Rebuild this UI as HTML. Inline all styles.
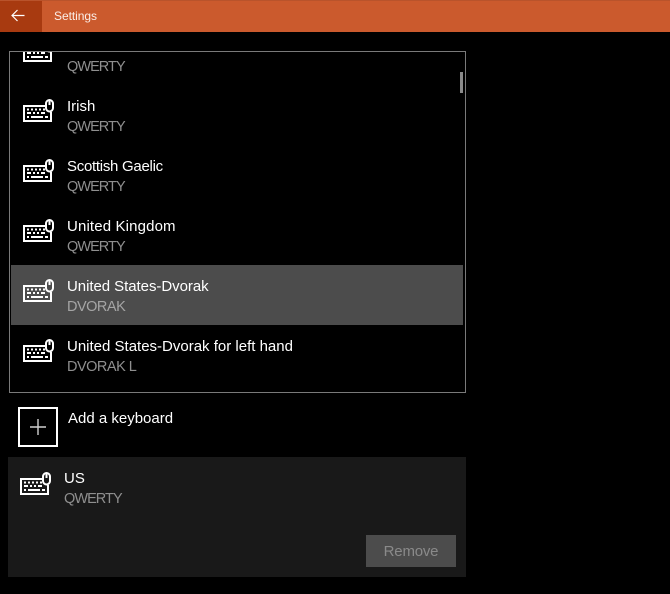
<!DOCTYPE html>
<html>
<head>
<meta charset="utf-8">
<style>
html,body{margin:0;padding:0;background:#000;}
body{width:670px;height:594px;position:relative;overflow:hidden;font-family:"Liberation Sans",sans-serif;color:#fff;}
.abs{position:absolute;}
.t{position:absolute;white-space:nowrap;font-size:15px;line-height:20px;}
.s{color:#8f8f8f;font-size:14.5px;letter-spacing:-.95px;}
svg{position:absolute;display:block;}
</style>
</head>
<body>
<svg width="0" height="0" style="position:absolute">
<defs>
<symbol id="kb" viewBox="0 0 32 26">
<path d="M23 8H1v15h27V14" fill="none" stroke="#fff" stroke-width="2"/>
<rect x="23" y="2" width="7" height="11.500" rx="3.500" fill="none" stroke="#fff" stroke-width="2"/>
<path d="M26.500 3v4" stroke="#fff" stroke-width="2"/>
<path d="M4 11.500h2M8 11.500h2M12 11.500h2M16 11.500h2M20 11.500h2M4 15h4M10 15h2M14 15h2M18 15h4M4 19h2M8 19h12M22 19h3" stroke="#fff" stroke-width="2" fill="none"/>
</symbol>
</defs>
</svg>

<div class="abs" style="left:0;top:0;width:670px;height:32px;background:#cb5a2d;"></div>
<div class="abs" style="left:0;top:1px;width:42px;height:31px;background:#a83a10;"></div>
<div class="abs" style="left:0;top:0;width:670px;height:1px;background:#b9532b;"></div>
<svg style="left:11px;top:9px" width="14" height="13" viewBox="0 0 14 13"><path d="M6.500 1L1 6.500L6.500 12M1 6.500H13.500" fill="none" stroke="#fff" stroke-width="1.200"/></svg>
<div class="t" style="left:54px;top:6px;font-size:12px;line-height:20px;color:#fbeee8;letter-spacing:-.05px;">Settings</div>

<div class="abs" style="left:9px;top:51px;width:455px;height:340px;border:1px solid #7a7a7a;overflow:hidden;">
  <div class="abs" style="left:1px;top:213px;width:452px;height:60px;background:#4c4c4c;"></div>
  <svg style="left:13px;top:-14px" width="32" height="26"><use href="#kb"/></svg>
  <div class="t s" style="left:57px;top:5px;">QWERTY</div>
  <div class="t" style="left:57px;top:-17px;">English (Israel)</div>

  <svg style="left:13px;top:46px" width="32" height="26"><use href="#kb"/></svg>
  <div class="t" style="left:57px;top:45px;">Irish</div>
  <div class="t s" style="left:57px;top:65px;">QWERTY</div>

  <svg style="left:13px;top:106px" width="32" height="26"><use href="#kb"/></svg>
  <div class="t" style="left:57px;top:105px;letter-spacing:-.28px;">Scottish Gaelic</div>
  <div class="t s" style="left:57px;top:125px;">QWERTY</div>

  <svg style="left:13px;top:166px" width="32" height="26"><use href="#kb"/></svg>
  <div class="t" style="left:57px;top:165px;letter-spacing:.14px;">United Kingdom</div>
  <div class="t s" style="left:57px;top:185px;">QWERTY</div>

  <svg style="left:13px;top:226px" width="32" height="26"><use href="#kb"/></svg>
  <div class="t" style="left:57px;top:225px;letter-spacing:-.05px;">United States-Dvorak</div>
  <div class="t s" style="left:57px;top:245px;color:#a5a5a5;letter-spacing:-.5px;">DVORAK</div>

  <svg style="left:13px;top:286px" width="32" height="26"><use href="#kb"/></svg>
  <div class="t" style="left:57px;top:285px;">United States-Dvorak for left hand</div>
  <div class="t s" style="left:57px;top:305px;letter-spacing:-.5px;">DVORAK L</div>

  <div class="abs" style="left:450px;top:20px;width:3px;height:21px;background:#8a8a8a;"></div>
</div>

<div class="abs" style="left:18px;top:407px;width:36px;height:36px;border:2px solid #fff;"></div>
<svg style="left:30px;top:419px" width="16" height="16" viewBox="0 0 16 16"><path d="M8 0V16M0 8H16" stroke="#cfcfcf" stroke-width="1.400"/></svg>
<div class="t" style="left:68px;top:409px;">Add a keyboard</div>

<div class="abs" style="left:8px;top:457px;width:458px;height:120px;background:#191919;"></div>
<svg style="left:20px;top:471px" width="32" height="26"><use href="#kb"/></svg>
<div class="t" style="left:64px;top:469px;">US</div>
<div class="t s" style="left:64px;top:489px;">QWERTY</div>
<div class="abs" style="left:366px;top:535px;width:90px;height:32px;background:#4c4c4c;color:#8a8a8a;font-size:15px;line-height:34px;text-align:center;letter-spacing:-.2px;">Remove</div>
</body>
</html>
